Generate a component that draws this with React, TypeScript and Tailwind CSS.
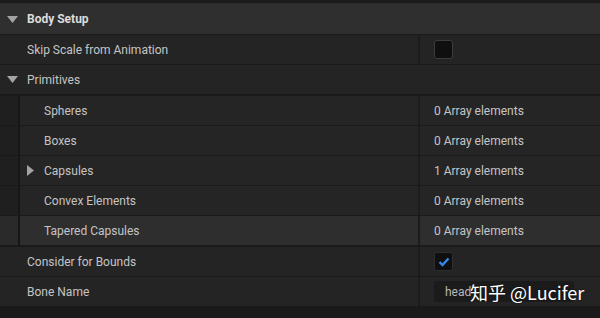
import React from "react";

const Down = () => (
  <svg width="11" height="7" viewBox="0 0 11 7" className="shrink-0">
    <polygon points="0,0 11,0 5.5,7" fill="#a3a3a3" />
  </svg>
);
const Right = () => (
  <svg width="7" height="11" viewBox="0 0 7 11" className="shrink-0">
    <polygon points="0,0 7,5.5 0,11" fill="#a3a3a3" />
  </svg>
);

function Row({ label, children }: { label: string; children?: React.ReactNode }) {
  return (
    <div className="flex h-[30px] border-t border-[#1a1a1a] bg-[#242424]">
      <div className="flex w-[420px] items-center pl-[27px] border-r-2 border-[#1c1c1c]">{label}</div>
      <div className="flex flex-1 items-center pl-[14px]">{children}</div>
    </div>
  );
}

function Child({ label, value, arrow, hi }: { label: string; value: string; arrow?: boolean; hi?: boolean }) {
  return (
    <div className={`flex h-[30px] border-t border-[#1a1a1a] ${hi ? "bg-[#2e2e2e]" : "bg-[#252525]"}`}>
      <div className={`w-[18px] ${hi ? "bg-[#2a2a2a]" : "bg-[#1f1f1f]"}`} />
      <div className="w-[2px] bg-[#161616]" />
      <div className="flex w-[400px] items-center border-r-2 border-[#1c1c1c]">
        <div className="flex w-[24px] items-center pl-[7px]">{arrow ? <Right /> : null}</div>
        <span>{label}</span>
      </div>
      <div className="flex flex-1 items-center pl-[14px]">{value}</div>
    </div>
  );
}

export default function App() {
  return (
    <div
      className="relative h-[318px] w-[600px] overflow-hidden bg-[#1a1a1a] text-[12px] text-[#c4c4c4]"
      style={{ fontFamily: "Roboto, 'Liberation Sans', sans-serif" }}
    >
      <div className="h-[4px] bg-[#1c1c1c] border-b border-[#2a2a2a]" />
      <div className="flex h-[30px] items-center gap-[9px] bg-[#2f2f2f] pl-[7px] font-bold text-[#dcdcdc]">
        <Down />
        <span>Body Setup</span>
      </div>
      <Row label="Skip Scale from Animation">
        <div className="h-[19px] w-[19px] rounded-[3px] border border-[#3c3c3c] bg-[#0f0f0f]" />
      </Row>
      <div className="flex h-[30px] items-center gap-[9px] border-t border-[#1a1a1a] bg-[#242424] pl-[7px]">
        <Down />
        <span>Primitives</span>
      </div>
      <div className="border-t border-[#1a1a1a]">
        <Child label="Spheres" value="0 Array elements" />
        <Child label="Boxes" value="0 Array elements" />
        <Child label="Capsules" value="1 Array elements" arrow />
        <Child label="Convex Elements" value="0 Array elements" />
        <Child label="Tapered Capsules" value="0 Array elements" hi />
      </div>
      <div className="border-t border-[#1a1a1a]">
        <Row label="Consider for Bounds">
          <div className="flex h-[19px] w-[19px] items-center justify-center rounded-[3px] border border-[#2e2e2e] bg-[#0f0f0f]">
            <svg width="12" height="10" viewBox="0 0 12 10">
              <polyline points="1.5,5 4.5,8 10.5,1.5" fill="none" stroke="#2f8ae8" strokeWidth="2.4" />
            </svg>
          </div>
        </Row>
        <Row label="Bone Name">
          <div className="flex h-[21px] w-[140px] items-center rounded-[3px] bg-[#1b1b1b] pl-[11px] text-[#b8b8b8]">head</div>
        </Row>
      </div>
      <div
        className="absolute left-[470px] top-[280px] text-[18px] leading-[24px] text-white"
        style={{ fontFamily: "'Noto Sans CJK SC', 'Noto Sans', sans-serif", textShadow: "0 0 2px rgba(0,0,0,0.6)" }}
      >
        知乎 @Lucifer
      </div>
    </div>
  );
}
